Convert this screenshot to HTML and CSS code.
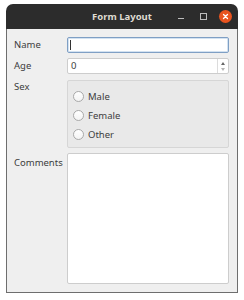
FILE: index.html
```html
<!DOCTYPE html>
<html lang="en">

<head>
    <meta charset="UTF-8">
    <meta name="viewport" content="width=device-width, initial-scale=1.0">
    <title>Form Layout</title>
    <link rel="stylesheet" href="styles.css">
</head>

<body>
    <div class="window">
        <!-- Title bar -->
        <div class="titlebar">
            <span></span>
            <span class="title">Form Layout</span>
            <div class="controls">
                <span class="ctl"><span class="min"></span></span>
                <span class="ctl"><span class="max"></span></span>
                <span class="ctl close">
                    <svg width="13" height="13" viewBox="0 0 13 13">
                        <path d="M4.5 4.5 L8.5 8.5 M8.5 4.5 L4.5 8.5" stroke="#fff" stroke-width="1.3" stroke-linecap="round"/>
                    </svg>
                </span>
            </div>
        </div>

        <!-- Form -->
        <div class="content">
            <div class="form">
                <label class="lbl">Name</label>
                <div class="field focused"><span class="caret"></span></div>

                <label class="lbl">Age</label>
                <div class="field spin">
                    <span class="value">0</span>
                    <div class="arrows">
                        <span class="up"></span>
                        <span class="down"></span>
                    </div>
                </div>

                <label class="lbl top">Sex</label>
                <div class="group">
                    <div class="radio"><span class="dot"></span>Male</div>
                    <div class="radio"><span class="dot"></span>Female</div>
                    <div class="radio"><span class="dot"></span>Other</div>
                </div>

                <label class="lbl top comments">Comments</label>
                <div class="field area"></div>
            </div>
        </div>
    </div>
</body>

</html>
```

FILE: styles.css
```css
body {
    margin: 0;
    background: #fff;
    font-family: "Noto Sans", "DejaVu Sans", sans-serif;
    font-size: 9.5px;
    color: #3c3c3c;
}

.window {
    margin: 4px 6px 0;
    width: 232px;
    border-radius: 7px 7px 0 0;
    overflow: hidden;
}

.titlebar {
    height: 25px;
    background: #2c2c2c;
    display: grid;
    grid-template-columns: 1fr auto 1fr;
    align-items: center;
}

.title {
    color: #dfdbd2;
    font-weight: bold;
    font-size: 9.5px;
}

.controls {
    justify-self: end;
    display: flex;
    align-items: center;
    gap: 9px;
    padding-right: 6.5px;
}

.ctl {
    width: 13px;
    height: 13px;
    display: flex;
    align-items: center;
    justify-content: center;
}

.min {
    width: 6px;
    height: 1px;
    background: #bdbdbd;
    margin-top: 4px;
}

.max {
    width: 5px;
    height: 5px;
    border: 1px solid #bdbdbd;
}

.close {
    background: #e9541f;
    border-radius: 50%;
}

.content {
    background: #efefef;
    border: 1px solid #6e6e6e;
    border-top: none;
    padding: 8px 8px 8px 7px;
}

.form {
    display: grid;
    grid-template-columns: 53px 162px;
    grid-template-rows: 16px 16px 69px 131px;
    row-gap: 5px;
}

.lbl {
    line-height: 16px;
}

.lbl.top {
    align-self: start;
}

.comments {
    padding-top: 2px;
}

.field {
    box-sizing: border-box;
    background: #fff;
    border: 1px solid #cdcdcd;
    border-radius: 2px;
    display: flex;
    align-items: center;
}

.focused {
    border-color: #7f9fc4;
    box-shadow: inset 0 0 0 1px #d3e2f1;
}

.caret {
    width: 1px;
    height: 10px;
    background: #333;
    margin-left: 2px;
}

.spin .value {
    flex: 1;
    padding-left: 3px;
    line-height: 14px;
}

.arrows {
    width: 10px;
    height: 14px;
    border-left: 1px solid #dcdcdc;
    display: flex;
    flex-direction: column;
    align-items: center;
    justify-content: center;
    gap: 3px;
}

.up {
    border-left: 2.5px solid transparent;
    border-right: 2.5px solid transparent;
    border-bottom: 3px solid #666;
}

.down {
    border-left: 2.5px solid transparent;
    border-right: 2.5px solid transparent;
    border-top: 3px solid #b4b4b4;
}

.group {
    margin-top: 1px;
    box-sizing: border-box;
    background: #e9e9e9;
    border: 1px solid #d6d6d6;
    border-radius: 2px;
    padding: 6px 5px 0;
}

.radio {
    height: 19px;
    display: flex;
    align-items: center;
    gap: 4px;
}

.dot {
    box-sizing: border-box;
    width: 11px;
    height: 11px;
    border-radius: 50%;
    border: 1px solid #a9a9a9;
    background: linear-gradient(#fff, #f3f3f3);
}

.area {
    align-items: flex-start;
}
```
